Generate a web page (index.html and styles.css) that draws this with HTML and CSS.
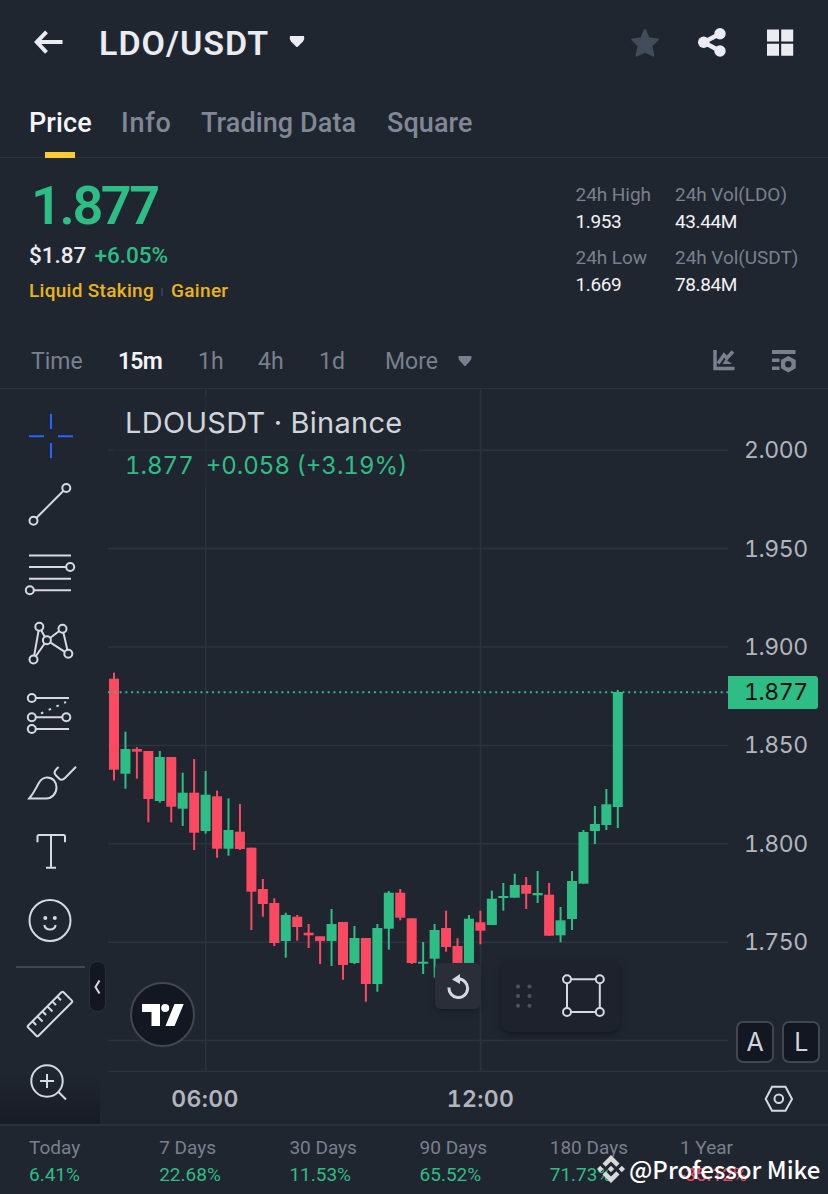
FILE: index.html
```html
<!DOCTYPE html>
<html lang="en">
<head>
    <meta charset="UTF-8">
    <meta name="viewport" content="width=device-width, initial-scale=1.0">
    <title>LDO/USDT</title>
    <link rel="stylesheet" href="styles.css">
</head>
<body>
    <!-- Header -->
    <header class="topbar">
        <svg class="back" width="32" height="26" viewBox="0 0 32 26"><path d="M29.500 12H4M13.500 1.800L3.800 12L13.500 22.300" /></svg>
        <h1>LDO/USDT</h1>
        <svg class="caret" width="16" height="12" viewBox="0 0 16 12"><path d="M1 0H15Q16 3 14 5.500L8.500 11H7.500L2 5.500Q0 3 1 0Z" /></svg>
        <div class="actions">
            <svg width="30" height="30" viewBox="0 0 30 30"><path class="star" d="M15 2L18.700 10.300L27.800 11.500L21.300 17.800L23.500 27.500L15 23.500L6.500 27.500L8.700 17.800L2.200 11.500L11.300 10.300Z" /></svg>
            <svg width="30" height="30" viewBox="0 0 30 30"><path class="share-line" d="M22 5.700L5.700 14.300L22 23" /><circle cx="22" cy="5.700" r="5.700" /><circle cx="5.700" cy="14.300" r="5.700" /><circle cx="22" cy="23" r="5.700" /></svg>
            <svg width="30" height="30" viewBox="0 0 30 30"><path d="M2 1.500H14V13.500H2ZM16.200 1.500H28.200V13.500H16.200ZM2 15.800H14V27.800H2ZM16.200 15.800H28.200V27.800H16.200Z" /></svg>
        </div>
    </header>

    <nav class="tabs">
        <a class="tab active t-price">Price</a>
        <a class="tab t-info">Info</a>
        <a class="tab t-data">Trading Data</a>
        <a class="tab t-square">Square</a>
    </nav>

    <!-- Price summary -->
    <section class="summary">
        <div class="price-block">
            <div class="price">1.877</div>
            <div class="fiat"><span>$1.87</span><span class="up">+6.05%</span></div>
            <div class="tags"><span>Liquid Staking</span><i></i><span class="gainer">Gainer</span></div>
        </div>
        <dl class="stats">
            <div><dt>24h High</dt><dd>1.953</dd></div>
            <div><dt>24h Vol(LDO)</dt><dd>43.44M</dd></div>
            <div><dt>24h Low</dt><dd>1.669</dd></div>
            <div><dt>24h Vol(USDT)</dt><dd>78.84M</dd></div>
        </dl>
    </section>

    <!-- Intervals -->
    <div class="intervals">
        <span class="i-time">Time</span>
        <span class="i-15 active">15m</span>
        <span class="i-1h">1h</span>
        <span class="i-4h">4h</span>
        <span class="i-1d">1d</span>
        <span class="i-more">More</span>
        <svg class="more-caret" width="14" height="11" viewBox="0 0 14 11"><path d="M0.500 0H13.500Q14 3 12 5L7.500 10H6.500L2 5Q0 3 0.500 0Z" /></svg>
        <svg class="indicator" width="22" height="22" viewBox="0 0 22 22"><path class="line" d="M2 0V18.500H21.500M5 13.500L11 5L14 8L20 1.500" /><path d="M13 7.500L13.500 10L19 14H9.500L12 10Z" /></svg>
        <svg width="26" height="24" viewBox="0 0 26 24"><path d="M1 1H24.500V5H1ZM1 9.500H8.500V13H1ZM1 17.500H8.500V21H1Z" /><path fill-rule="evenodd" d="M17.300 7L24.700 11V19.300L17.300 23.500L10 19.300V11ZM17.300 12A3.200 3.200 0 1 0 17.300 18.400A3.200 3.200 0 1 0 17.300 12Z" /></svg>
    </div>

    <!-- Chart -->
    <main class="chart">
        <aside class="tools">
            <button><svg viewBox="0 0 56 56" class="blue"><path d="M29 6V21M29 35V50M7 28.200H22M36 28.200H51" /></svg></button>
            <button><svg viewBox="0 0 56 56"><path d="M14.300 41L41.500 13.800" /><circle cx="44.300" cy="11" r="4" /><circle cx="11.500" cy="43.800" r="4" /></svg></button>
            <button><svg viewBox="0 0 56 56"><path d="M7 9.500H49M7 21H44M7 32.700H49M12 44.300H49" /><circle cx="48.200" cy="21" r="4" /><circle cx="7.800" cy="44.300" r="4" /></svg></button>
            <button><svg viewBox="0 0 56 56"><path d="M16.600 15.600L12.200 40.500M19.300 15.200L22.700 21.800M22.500 28.700L13.800 41.200M28 23L37.300 16M41.400 17.600L45.400 35M28.200 27.300L42.800 36.800" /><circle cx="17.300" cy="11.700" r="4" /><circle cx="40.500" cy="13.700" r="4" /><circle cx="24.900" cy="25.300" r="4" /><circle cx="11.500" cy="44.500" r="4" /><circle cx="46.300" cy="38.800" r="4" /></svg></button>
            <button><svg viewBox="0 0 56 56"><path d="M14 14H47M14 33.300H40M14 45H47" /><path class="dots" d="M19 29.500L44 18" /><circle cx="9.800" cy="14" r="4" /><circle cx="9.800" cy="33.300" r="4" /><circle cx="44.300" cy="33.300" r="4" /><circle cx="9.800" cy="45" r="4" /></svg></button>
            <button><svg viewBox="0 0 56 56"><path d="M7.200 44.500C12.500 38 13.500 35 16.500 29.500C19 25 22 23.500 25 23.500C31 23.500 34.500 28 34.500 33.500C34.500 39.500 30 44.500 24 44.500ZM36.500 13L34.300 15.200C32 17.500 32 19.500 34 21.500L37 24.500C39 26.500 41 26 43 24L54 12.800" /></svg></button>
            <button><svg viewBox="0 0 56 56"><path d="M15.500 19.300V13.500Q15.500 12 17 12H41.500Q43 12 43 13.500V19.300M29 12V44.700M24 44.700H34" /></svg></button>
            <button><svg viewBox="0 0 56 56"><circle cx="28" cy="28.500" r="20.500" /><path d="M22.300 33C23.500 39 32.500 39 33.700 33" /><g class="eyes"><circle cx="23.300" cy="26" r="2" /><circle cx="32.800" cy="26" r="2" /></g></svg></button>
            <hr>
            <button><svg viewBox="0 0 56 56"><g transform="rotate(-45 28 28)"><rect x="3" y="20.700" width="50" height="14.500" rx="1.500" /><path d="M10.500 21V26M17.500 21V28M24.500 21V26M31.500 21V28M38.500 21V26M45.500 21V26" /></g></svg></button>
            <button><svg viewBox="0 0 56 56"><circle cx="25" cy="26" r="15.700" /><path d="M18 26H32M25 19V33M36.500 37L44 44.500" /></svg></button>
            <div class="handle"><svg width="7" height="14" viewBox="0 0 7 14"><path d="M5.500 0.500L1.500 7L5.500 13.500" /></svg></div>
        </aside>

        <div class="plot">
            <svg id="candles" width="620" height="683" viewBox="108 389 620 683"></svg>
            <div class="legend">
                <div class="symbol">LDOUSDT · Binance</div>
                <div class="change"><span>1.877</span><span>+0.058 (+3.19%)</span></div>
            </div>
            <div class="tv">
                <svg width="42" height="22" viewBox="0 0 42 22"><path d="M0 0H18V22H9.500V8H0ZM32.500 0H41.700L32.500 22H23.500Z" /><circle cx="23.200" cy="4" r="4" /></svg>
            </div>
            <div class="reset"><svg width="24" height="26" viewBox="0 0 24 26"><path class="arc" d="M3 14.500A9.300 9.300 0 1 0 13 6" /><path d="M14 1V11L6 6.500Z" /></svg></div>
            <div class="floating">
                <svg width="18" height="24" viewBox="0 0 18 24" class="grip"><circle cx="2" cy="2.500" r="2" /><circle cx="13.500" cy="2.500" r="2" /><circle cx="2" cy="12" r="2" /><circle cx="13.500" cy="12" r="2" /><circle cx="2" cy="21.700" r="2" /><circle cx="13.500" cy="21.700" r="2" /></svg>
                <svg width="44" height="44" viewBox="0 0 44 44" class="shape"><path d="M9 5.300H33.500M9 38H33.500M5 9.300V34M37.800 9.300V34" /><circle cx="5" cy="5.300" r="4" /><circle cx="37.800" cy="5.300" r="4" /><circle cx="5" cy="38" r="4" /><circle cx="37.800" cy="38" r="4" /></svg>
            </div>
        </div>

        <div class="price-axis">
            <span>2.000</span>
            <span>1.950</span>
            <span>1.900</span>
            <span>1.850</span>
            <span>1.800</span>
            <span>1.750</span>
            <b class="last">1.877</b>
            <div class="modes"><b>A</b><b>L</b></div>
        </div>

        <div class="time-axis"><span>06:00</span><span>12:00</span></div>
        <div class="corner"><svg width="30" height="28" viewBox="0 0 30 28"><path d="M8 1.800H21.500L28 14L21.500 25.700H8L1.700 14Z" /><circle cx="14.800" cy="13.800" r="4.300" /></svg></div>
    </main>

    <!-- Performance -->
    <footer class="performance">
        <div><span>Today</span><b>6.41%</b></div>
        <div><span>7 Days</span><b>22.68%</b></div>
        <div><span>30 Days</span><b>11.53%</b></div>
        <div><span>90 Days</span><b>65.52%</b></div>
        <div><span>180 Days</span><b>71.73%</b></div>
        <div><span>1 Year</span><b class="down">-35.12%</b></div>
        <div class="author">
            <svg width="28" height="28" viewBox="0 0 28 28"><path d="M14 0L22.500 8.500L19.300 11.700L14 6.400L8.700 11.700L5.500 8.500ZM14 28L22.500 19.500L19.300 16.300L14 21.600L8.700 16.300L5.500 19.500ZM3.200 10.800L6.400 14L3.200 17.200L0 14ZM24.800 10.800L28 14L24.800 17.200L21.600 14ZM14 10.800L17.200 14L14 17.200L10.800 14Z" /></svg>
            <span>@Professor Mike</span>
        </div>
    </footer>
    <script src="chart.js"></script>
</body>
</html>
```
FILE: styles.css
```css
* {
    box-sizing: border-box;
}
html, body {
    margin: 0;
    padding: 0;
    height: 1194px;
    overflow: hidden;
}
body {
    background-color: #202630;
    color: #eaecef;
    font-family: Roboto, "Liberation Sans", sans-serif;
}
svg {
    display: block;
    flex: none;
}
.topbar {
    display: flex;
    align-items: center;
    height: 86px;
    padding: 0 33px;
    fill: #eaecf2;
}
.back path {
    fill: none;
    stroke: #eaecf2;
    stroke-width: 4;
}
.topbar h1 {
    margin: 0 0 0 34px;
    width: 190px;
    font-size: 34px;
    font-weight: 600;
    letter-spacing: 1px;
    line-height: 40px;
    color: #eaecf2;
}
.caret {
    margin-top: -3px;
}
.actions {
    display: flex;
    gap: 37.5px;
    margin-left: auto;
}
.star {
    fill: #434c5a;
    stroke: #434c5a;
    stroke-width: 2;
    stroke-linejoin: round;
}
.share-line {
    fill: none;
    stroke: #eaecf2;
    stroke-width: 4.5;
}

/* Tabs */
.tabs {
    display: flex;
    height: 72px;
    padding-left: 29px;
    border-bottom: 1px solid #2d343f;
}
.tab {
    position: relative;
    padding-top: 19px;
    font-size: 27px;
    font-weight: 500;
    line-height: 36px;
    letter-spacing: 0.100px;
    white-space: nowrap;
    color: #808897;
}
.tab.active {
    color: #f4f5f8;
}
.tab.active::after {
    content: "";
    position: absolute;
    left: 16px;
    bottom: -1px;
    width: 30px;
    height: 6px;
    background-color: #fbcb34;
}
.t-price {
    width: 92px;
}
.t-info {
    width: 80px;
    letter-spacing: 0.800px;
}
.t-data {
    width: 186px;
}

/* Summary */
.summary {
    display: flex;
    justify-content: space-between;
    height: 176px;
    padding: 23px 29px 0 29px;
}
.price {
    height: 56px;
    padding-left: 2px;
    font-size: 54px;
    font-weight: 600;
    line-height: 50px;
    color: #2ebd85;
    letter-spacing: -2.400px;
}
.fiat {
    display: flex;
    gap: 8px;
    height: 36px;
    font-size: 22.500px;
    font-weight: 500;
    line-height: 36px;
}
.up {
    color: #2ebd85;
}
.tags {
    display: flex;
    align-items: center;
    height: 34px;
    font-size: 19px;
    font-weight: 500;
    letter-spacing: 0.300px;
    color: #eab41c;
}
.tags i {
    width: 2px;
    height: 8px;
    margin: 4px 8px 0 7px;
    background-color: #353c48;
}
.stats {
    display: grid;
    grid-template-columns: 99.500px 124px;
    grid-auto-rows: 63.200px;
    margin: 0;
    font-size: 19px;
    line-height: 27px;
    white-space: nowrap;
}
.stats dt {
    letter-spacing: -0.050px;
    color: #79808e;
}
.stats dd {
    margin: 0;
    letter-spacing: -0.400px;
    color: #f2f3f6;
}

/* Intervals */
.intervals {
    display: flex;
    align-items: center;
    height: 55px;
    padding-left: 31px;
    border-bottom: 1px solid #2d343f;
    font-size: 23px;
    color: #79808e;
    fill: #79808e;
}
.intervals .active {
    margin-left: -1px;
    color: #f4f5f8;
    font-weight: 600;
    letter-spacing: -0.800px;
}
.i-time { width: 88px; }
.i-15 { width: 80px; }
.i-1h { width: 60px; }
.i-4h { width: 61px; }
.i-1d { width: 66px; }
.i-more { width: 73px; }
.indicator {
    margin: 0 36px 0 241px;
}
.indicator .line {
    fill: none;
    stroke: #79808e;
    stroke-width: 3.5;
}

/* Chart */
.chart {
    display: grid;
    grid-template-columns: 108px 620px 100px;
    grid-template-rows: 683px 52px;
    font-family: Inter, "Liberation Sans", sans-serif;
    font-variant-numeric: tabular-nums;
}
.tools {
    position: relative;
    grid-row: 1 / 3;
    width: 100px;
    padding-top: 12.500px;
    background: linear-gradient(#202630 685px, #171b26 735px);
}
.tools button {
    display: flex;
    align-items: center;
    width: 100px;
    height: 69.100px;
    padding: 0 0 0 22px;
    border: none;
    background: none;
}
.tools svg {
    width: 56px;
    height: 56px;
    fill: none;
    stroke: #d6d9e4;
    stroke-width: 2;
}
.tools .blue {
    stroke: #2962ff;
}
.tools .dots {
    stroke-dasharray: 2.5 6;
}
.tools .eyes {
    fill: #d6d9e4;
    stroke: none;
}
.tools hr {
    width: 69px;
    margin: 12px 0 11px 16px;
    border: none;
    border-top: 2px solid #434752;
}
.handle {
    position: absolute;
    left: 89px;
    top: 572px;
    display: flex;
    align-items: center;
    justify-content: center;
    width: 17px;
    height: 51px;
    border: 1px solid #2a2e39;
    border-radius: 8px;
    background-color: #131722;
}
.handle svg {
    width: 7px;
    height: 14px;
}
.plot {
    position: relative;
}
.grid {
    stroke: #2d333e;
    stroke-width: 1.5;
}
.rise {
    fill: #2ebd85;
}
.fall {
    fill: #fa4960;
}
.last-line {
    stroke: #2ebd85;
    stroke-width: 2;
    stroke-dasharray: 2 3.780;
}
.legend {
    position: absolute;
    left: 5px;
    top: 8px;
    padding: 4px 12px 0;
    background-color: rgba(32, 38, 48, 0.6);
    color: #d1d4dc;
    white-space: nowrap;
}
.symbol {
    height: 43px;
    font-size: 29px;
    line-height: 43px;
    letter-spacing: 0.300px;
}
.change {
    display: flex;
    gap: 12px;
    height: 43px;
    font-size: 24px;
    line-height: 43px;
    letter-spacing: 0;
    color: #2ebd85;
}
.tv {
    position: absolute;
    left: 22px;
    top: 593px;
    display: flex;
    align-items: center;
    justify-content: center;
    width: 65px;
    height: 65px;
    border: 2px solid #434651;
    border-radius: 50%;
    background-color: #131722;
    fill: #fff;
}
.reset {
    position: absolute;
    left: 327px;
    top: 574px;
    display: flex;
    align-items: center;
    justify-content: center;
    width: 46px;
    height: 46px;
    border-radius: 6px;
    background-color: #2a2e39;
    box-shadow: 0 3px 6px rgba(0, 0, 0, 0.25);
    fill: #d6d9e4;
}
.reset .arc {
    fill: none;
    stroke: #d6d9e4;
    stroke-width: 3;
}
.floating {
    position: absolute;
    left: 393px;
    top: 570px;
    display: flex;
    align-items: center;
    width: 119px;
    height: 73px;
    padding-left: 15px;
    gap: 28px;
    border-radius: 10px;
    background-color: #1e222d;
    box-shadow: 0 3px 7px rgba(0, 0, 0, 0.35);
}
.grip {
    fill: #50535e;
}
.shape {
    fill: none;
    stroke: #d6d9e4;
    stroke-width: 2;
}
.price-axis {
    position: relative;
    padding-top: 12.200px;
    border-bottom: 2px solid #2a303b;
    color: #b2b5be;
    font-size: 23px;
    letter-spacing: -0.400px;
}
.price-axis span {
    display: block;
    height: 98.400px;
    padding-left: 16px;
    line-height: 98.400px;
}
.last {
    position: absolute;
    left: 0;
    top: 287px;
    width: 90px;
    height: 33px;
    padding-left: 16px;
    border-radius: 0 3px 3px 0;
    background-color: #2ebd85;
    color: #0c0e12;
    font-weight: 400;
    line-height: 33px;
}
.modes {
    position: absolute;
    left: 8px;
    top: 632px;
    display: flex;
    gap: 8px;
}
.modes b {
    width: 38px;
    height: 42px;
    border: 2px solid #434651;
    border-radius: 7px;
    background-color: #131722;
    color: #d1d4dc;
    font-size: 25px;
    font-weight: 400;
    line-height: 39px;
    text-align: center;
}
.time-axis {
    display: grid;
    grid-template-columns: 194px 357px;
    font-size: 23px;
    font-weight: 600;
    line-height: 55px;
    letter-spacing: 0.400px;
    text-align: center;
    color: #b2b5be;
}
.corner {
    padding: 13px 0 0 36px;
}
.corner svg {
    fill: none;
    stroke: #d6d9e4;
    stroke-width: 2;
}

/* Performance */
.performance {
    position: relative;
    display: grid;
    grid-template-columns: repeat(6, 130.200px);
    height: 70px;
    padding: 8px 0 0 29px;
    border-top: 2px solid #2b313c;
    font-size: 19px;
    line-height: 27px;
    white-space: nowrap;
}
.performance span {
    display: block;
    color: #79808e;
}
.performance b {
    font-weight: 400;
    color: #2ebd85;
}
.performance .down {
    color: #f6465d;
}
.author {
    position: absolute;
    left: 597px;
    top: 24px;
    display: flex;
    align-items: center;
    gap: 4px;
    height: 38px;
    fill: #d9d9d9;
    font-family: "Noto Sans CJK SC", sans-serif;
    font-size: 24px;
    font-weight: 500;
}
.performance .author span {
    margin-top: -2px;
    color: #fff;
}
```
FILE: chart.js
```js
// [high, low, body top, body bottom, rising]
const candles = [
    [672.7, 780.5, 678.7, 769.7, 0], [731.7, 788.7, 749, 773.7, 1], [747.3, 778.7, 749, 751.7, 0],
    [751, 822.3, 751, 799, 0], [751, 802.7, 757, 801, 1], [757, 822.3, 757, 806.7, 0],
    [772.7, 826, 792.7, 808.7, 1], [759, 850, 792.7, 832.7, 0], [771, 833.7, 794.7, 831, 1],
    [790.7, 857.7, 796.3, 848.7, 0], [798.3, 855.7, 830, 848.7, 1], [804, 850, 831.7, 849, 0],
    [847.7, 930, 847.7, 891.7, 0], [879, 916.7, 889, 904, 0], [898.3, 946, 903, 943, 0],
    [912.7, 957.7, 915, 941, 1], [915, 940.7, 916.7, 927, 0], [924, 948, 932.7, 935.3, 0],
    [936.3, 964, 936.3, 941, 0], [909, 966, 924, 941, 1], [922, 979.7, 922, 965, 0],
    [926, 964, 938, 963, 1], [938, 1001.7, 938, 984, 0], [924, 991.7, 928, 984, 1],
    [891, 949.7, 892.7, 928.7, 1], [889, 920.3, 892.7, 917.7, 0], [918.3, 964, 918.3, 963, 0],
    [942, 974, 961.7, 963.7, 1], [924, 977.7, 930, 958.7, 1], [910.7, 951.7, 928, 947, 0],
    [938.3, 963, 946, 963, 0], [915, 963, 918.7, 963, 1], [910.7, 944.3, 922.3, 930.7, 0],
    [890.7, 925, 898.7, 925, 1], [883, 910.7, 896, 898, 1], [873.7, 897.7, 885, 897.7, 1],
    [877, 909, 885, 893.7, 0], [871, 903, 893, 895.3, 1], [883, 935.7, 894.7, 935.7, 0],
    [907, 942.3, 920.3, 935.3, 1], [871, 930, 881, 919, 1], [830, 883.7, 832, 883.7, 1],
    [806, 844, 824, 831, 1], [789, 830, 804.3, 825, 1], [690, 828, 692, 807, 1]
];

let out = '';
for (let i = 0; i < 7; i++) {
    const y = 450.2 + i * 98.4;
    out += `<path class="grid" d="M108 ${y}H728" />`;
}
out += '<path class="grid" d="M205.700 389V1071M480.500 389V1071M108 1071.500H728" />';

candles.forEach(([high, low, top, bottom, rising], i) => {
    const x = 114 + i * 11.45;
    out += `<g class="${rising ? 'rise' : 'fall'}">
        <rect x="${x - 1}" y="${high}" width="2" height="${low - high}" />
        <rect x="${x - 5}" y="${top}" width="10" height="${bottom - top}" />
    </g>`;
});
out += '<path class="last-line" d="M108 692.300H728" />';

document.getElementById('candles').innerHTML = out;
```
